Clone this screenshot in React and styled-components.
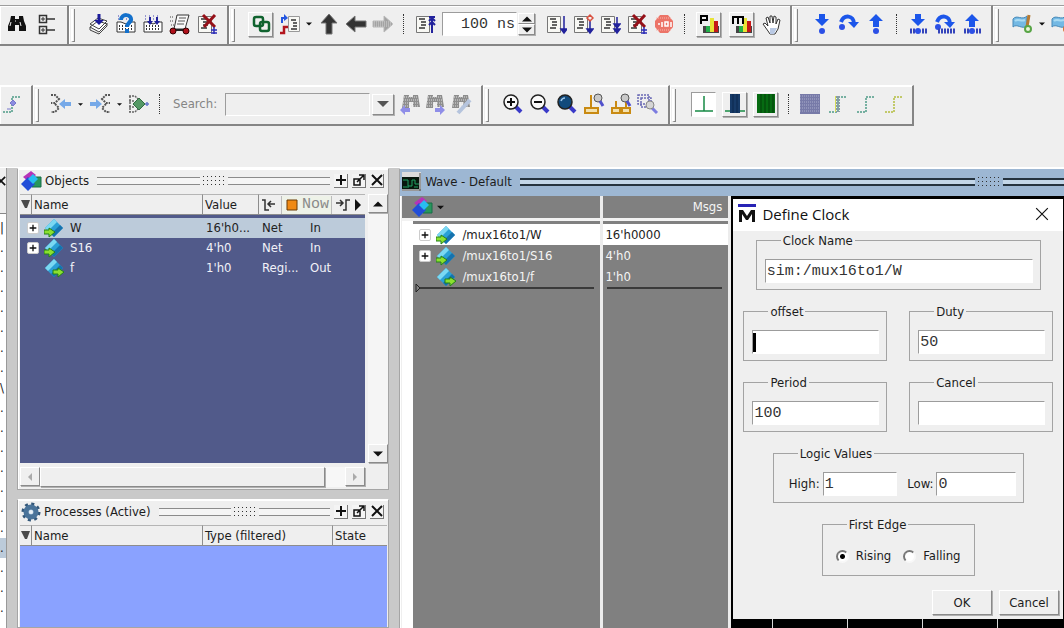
import React from 'react';
import styled, { createGlobalStyle, css } from 'styled-components';

const GlobalStyle = createGlobalStyle`
  * {
    box-sizing: border-box;
  }

  body {
    margin: 0;
    background: #efefef;
    color: #1c1c1c;
    font: 13px/16px 'DejaVu Sans Condensed', 'Noto Sans', sans-serif;
    overflow: hidden;
  }

  svg {
    display: block;
    flex: none;
  }
`;

const mono = css`
  font: 15px/18px 'Liberation Mono', monospace;
`;

const raised = css`
  border: 1px solid;
  border-color: #fff #8a8a8a #8a8a8a #fff;
  box-shadow: 1px 1px 0 #b0b0b0;
  background: #efefef;
`;

const sunken = css`
  border: 1px solid;
  border-color: #9c9c9c #fff #fff #9c9c9c;
`;

/* ---------- page ---------- */

const Page = styled.div`
  display: flex;
  flex-direction: column;
  height: 100vh;
`;

const ToolbarArea = styled.header`
  display: flex;
  flex-direction: column;
  gap: 39px;
  padding: 5px 0 41px;
  overflow: hidden;
`;

const ToolbarRow = styled.div`
  display: flex;
`;

const Toolbar = styled.div`
  display: flex;
  align-items: center;
  flex: none;
  height: 41px;
  padding: 0 ${({ $end = 7 }) => $end}px 2px 0;
  border-top: 1px solid ${({ $soft }) => ($soft ? '#fff' : '#9d9d9d')};
  border-right: 2px solid #858585;
  border-bottom: 2px solid #858585;
  box-shadow: inset 1px 1px 0 #fff;
`;

const Grip = styled.span`
  align-self: stretch;
  width: 4px;
  margin: 3px ${({ $gap = 10 }) => $gap}px 0 2px;
  border-left: 2px solid #fff;
  border-right: 1px solid #868686;
  border-bottom: 1px solid #868686;
`;

const Tool = styled.button`
  display: flex;
  align-items: center;
  justify-content: center;
  flex: none;
  width: ${({ $w = 27 }) => $w}px;
  height: 26px;
  margin: 0;
  padding: 0;
  border: 0;
  background: none;
`;

const FramedTool = styled(Tool)`
  width: 25px;
  height: 25px;
  margin: 0 ${({ $side = 3 }) => $side}px;
  ${({ $pressed }) => ($pressed ? sunken : raised)}
  ${({ $pressed }) => $pressed && 'background: #fff;'}
`;

const Separator = styled.span`
  height: 20px;
  margin: 0 7px;
  border-left: 1px dotted #333;
`;

const TimeInput = styled.input`
  ${mono}
  ${sunken}
  width: 75px;
  height: 24px;
  margin-left: 4px;
  padding: 0 1px;
  text-align: right;
  color: #333;
  background: #fff;
`;

const Spinner = styled.div`
  display: flex;
  flex-direction: column;
  width: 17px;
  margin: 0 7px 0 1px;
`;

const SpinButton = styled.button`
  ${raised}
  display: flex;
  align-items: center;
  justify-content: center;
  height: 11px;
  padding: 0;
`;

const SearchLabel = styled.label`
  margin-left: 6px;
  color: #858585;
`;

const SearchInput = styled.input`
  ${sunken}
  width: 145px;
  height: 23px;
  margin: 0 2px 0 8px;
  background: #efefef;
`;

const SearchDrop = styled.button`
  ${raised}
  width: 22px;
  height: 21px;
  margin-right: 5px;
  padding: 0 4px;
`;

/* ---------- panes ---------- */

const Workspace = styled.main`
  display: grid;
  flex: 1;
  grid-template-columns: 7px 35% 1fr;
  gap: 10px;
  min-height: 0;
  border-top: 1px solid #fff;
  background: #c9c9c9;
`;

const Stack = styled.div`
  display: grid;
  grid-template-rows: 5fr 2fr;
  gap: 9px;
  min-height: 0;
`;

const Pane = styled.section`
  display: flex;
  flex-direction: column;
  min-width: 0;
  min-height: 0;
  border: 1px solid #a5a5a5;
  border-top-color: #fff;
  box-shadow: inset 1px 1px 0 #fff;
  background: #efefef;
`;

const PaneTitle = styled.div`
  display: flex;
  align-items: center;
  gap: 3px;
  flex: none;
  height: 25px;
  padding: 0 4px 2px 3px;
`;

const PaneName = styled.h2`
  margin: 0 5px 0 0;
  font-size: 13px;
  font-weight: normal;
`;

const Rule = styled.span`
  flex: ${({ $grow = 1 }) => $grow} 1 0;
  height: 8px;
  border: solid ${({ $dark }) => ($dark ? '#25333f' : '#8b8b8b')};
  border-width: ${({ $dark }) => ($dark ? 2 : 1)}px 0;
  background: ${({ $dark }) => ($dark ? '#c3d6e8' : '#f5f5f5')};
`;

const Dots = styled.span`
  width: 22px;
  height: 9px;
  background: linear-gradient(transparent 1px, ${({ $paper = '#efefef' }) => $paper} 1px) 0 0 / 4px
      4px,
    linear-gradient(90deg, #333 1px, transparent 1px) 0 0 / 4px 4px;
`;

const TitleButton = styled.button`
  display: flex;
  align-items: center;
  justify-content: center;
  width: 14px;
  height: 14px;
  margin-left: 1px;
  padding: 0;
  border: solid #777;
  border-width: 0 1px 1px 0;
  background: #f4f4f4;
`;

const Strip = styled.div`
  overflow: hidden;
  border-right: 1px solid #999;
  background: #fff;
`;

const StripHead = styled.div`
  display: flex;
  align-items: center;
  justify-content: flex-end;
  height: 26px;
  background: #efefef;
`;

const StripGap = styled.div`
  height: 24px;
  border-bottom: 4px solid #fff;
  background: #efefef;
  box-shadow: inset 0 -1px 0 #888;
`;

const StripRow = styled.div`
  height: 20px;
  line-height: 20px;
  background: ${({ $active }) => ($active ? '#bccbda' : '#fff')};
`;

const Split = styled.div`
  display: flex;
  flex: 1;
  min-height: 0;
`;

const ListArea = styled.div`
  flex: 1;
  min-width: 0;
  margin: 0 ${({ $end = 3 }) => $end}px 0 2px;
  background: ${({ $color }) => $color};
`;

const ListTable = styled.table`
  width: 100%;
  table-layout: fixed;
  border-collapse: separate;
  border-spacing: 0;

  th {
    height: 21px;
    padding: 0 2px;
    border-top: 1px solid #b5b5b5;
    border-right: 1px solid #8d8d8d;
    border-bottom: 1px solid #8d8d8d;
    background: #efefef;
    font-weight: normal;
    text-align: left;
    white-space: nowrap;
  }

  th:first-child {
    padding: 0 1px;
  }

  th:last-child {
    border-right: 0;
  }
`;

const ObjectRow = styled.tr`
  color: ${({ $selected }) => ($selected ? '#222' : '#f2f2f8')};
  background: ${({ $selected }) => ($selected ? '#bccbda' : 'transparent')};

  td {
    height: 20px;
    padding: 0 0 0 3px;
    white-space: nowrap;
  }
`;

const SpacerRow = styled.tr`
  td {
    height: 3px;
    padding: 0;
  }
`;

const NameCell = styled.div`
  display: flex;
  align-items: center;
  padding-left: ${({ $indent = 4 }) => $indent}px;
`;

const Expander = styled.button`
  display: flex;
  align-items: center;
  justify-content: center;
  width: 12px;
  height: 12px;
  margin-right: 5px;
  padding: 0;
  border: 1px solid #ccc;
  border-radius: 2px;
  background: #fff;
  visibility: ${({ $hidden }) => ($hidden ? 'hidden' : 'visible')};
`;

const ItemName = styled.span`
  margin-left: 6px;
`;

const NowBar = styled.div`
  display: flex;
  align-items: center;
  gap: 2px;
  height: 19px;
  color: #8a8a8a;
`;

const NowLabel = styled.span`
  ${mono}
  display: flex;
  align-items: center;
  gap: 4px;
  margin: 0 1px 0 3px;
  padding: 0 2px 0 4px;
  border: solid #bbb;
  border-width: 0 1px;
  background: #eef2e8;
`;

const ScrollColumn = styled.div`
  display: flex;
  flex-direction: column;
  justify-content: space-between;
  width: 20px;
  background: #f5f5f5;
`;

const ScrollRow = styled.div`
  display: flex;
  height: 20px;
  margin: 4px 23px 2px 2px;
  background: #f7f7f7;
`;

const ScrollButton = styled.button`
  ${raised}
  display: flex;
  align-items: center;
  justify-content: center;
  flex: none;
  width: 20px;
  height: 19px;
  padding: 0;
`;

const ScrollThumb = styled.div`
  ${raised}
  flex: 1;
  margin-right: 20px;
`;

/* ---------- wave ---------- */

const WavePane = styled(Pane)`
  border-right: 0;
  border-bottom: 0;
`;

const WaveTitle = styled(PaneTitle)`
  height: 27px;
  padding: 0 0 2px 2px;
  background: #9db7d3;
`;

const WaveName = styled(PaneName)`
  margin: 0 5px 0 1px;
`;

const WaveBody = styled.div`
  display: flex;
  flex: 1;
  min-height: 0;
  margin-left: 2px;
`;

const WaveTable = styled.table`
  flex: none;
  width: 329px;
  table-layout: fixed;
  border-collapse: separate;
  border-spacing: 0;
  background: #808080;
  color: #f5f5f5;

  th,
  td {
    padding: 0 6px 0 2px;
    border-right: 3px solid #ececec;
  }

  th {
    height: 25px;
    border-bottom: 3px solid #f2f2f2;
    font-weight: normal;
    text-align: left;
  }

  th:last-child {
    text-align: right;
  }

  td:first-child {
    padding-left: 0;
    border-left: 11px solid #fff;
  }
`;

const SignalRow = styled.tr`
  color: ${({ $selected }) => ($selected ? '#222' : '#f5f5f5')};
  background: ${({ $selected }) => ($selected ? '#fff' : 'transparent')};

  td {
    height: 21px;
  }
`;

const FillRow = styled.tr`
  height: 100%;
  vertical-align: top;
`;

const CursorLine = styled.div`
  display: flex;
  align-items: center;
  height: 2px;
  margin: 0 0 0 2px;

  &::after {
    content: '';
    flex: 1;
    height: 2px;
    background: #3a3a3a;
  }
`;

const MenuIcons = styled.div`
  display: flex;
  align-items: center;
  gap: 4px;
  padding-left: 8px;
`;

const WaveCanvas = styled.div`
  position: relative;
  flex: 1;
  background: repeating-linear-gradient(90deg, transparent 0 74px, #d8d8d8 74px 75px) 42px 0 / 75px
    100% #000;
`;

/* ---------- dialog ---------- */

const Dialog = styled.div`
  position: absolute;
  top: 0;
  left: 0;
  right: 0;
  border: solid #000;
  border-width: 3px 1px 0 2px;
  background: #efefef;
`;

const DialogTitle = styled.div`
  display: flex;
  align-items: center;
  gap: 6px;
  height: 32px;
  padding: 0 14px 3px 5px;
  background: #fff;
`;

const DialogName = styled.h1`
  flex: 1;
  margin: 0;
  font: 15px/20px 'Open Sans', 'Noto Sans', sans-serif;
  color: #111;
`;

const PlainButton = styled.button`
  padding: 0;
  border: 0;
  background: none;
`;

const DialogBody = styled.form`
  display: flex;
  flex-direction: column;
  align-items: center;
  gap: 12px;
  padding: 0 10px 4px;
`;

const Group = styled.fieldset`
  width: ${({ $width = '100%' }) => $width};
  min-width: 0;
  margin: 0;
  padding: 10px 7px 6px 8px;
  border: 1px solid #a3a3a3;
`;

const GroupLegend = styled.legend`
  height: 18px;
  margin-left: 16px;
  padding: 2px 2px 0;
`;

const Pair = styled.div`
  display: grid;
  grid-template-columns: 1fr 1fr;
  gap: 22px;
  width: 100%;
`;

const TextInput = styled.input`
  ${mono}
  ${sunken}
  display: block;
  width: 100%;
  min-width: 0;
  height: 24px;
  padding: 0 1px;
  color: #333;
  background: #fff;
  ${({ $caret }) =>
    $caret && 'background: linear-gradient(#000, #000) 0 2px / 3px 19px no-repeat #fff;'}
`;

const Fields = styled.div`
  display: flex;
  gap: 10px;
  padding-left: 7px;
`;

const FieldLabel = styled.label`
  display: flex;
  align-items: center;
  gap: 3px;
  flex: 1;
`;

const Radios = styled.div`
  display: flex;
  align-items: center;
  gap: 12px;
  height: 26px;
  padding-left: 5px;
`;

const RadioLabel = styled.label`
  display: flex;
  align-items: center;
  gap: 7px;
`;

const Radio = styled.input`
  appearance: none;
  width: 13px;
  height: 13px;
  margin: 0;
  border: 2px solid;
  border-color: #777 #f8f8f8 #f8f8f8 #777;
  border-radius: 50%;
  background: #fff;

  &:checked {
    background: radial-gradient(circle, #000 2px, #fff 3px);
  }
`;

const Actions = styled.div`
  display: flex;
  gap: 7px;
  align-self: flex-end;
  margin: 2px -6px 0 0;
`;

const ActionButton = styled.button`
  ${raised}
  width: 60px;
  height: 25px;
  padding: 0;
  color: #1c1c1c;
  font: inherit;
`;

/* ---------- icons ---------- */

const Svg = ({ w = 22, h = 22, children, ...rest }) => (
  <svg width={w} height={h} viewBox={`0 0 ${w} ${h}`} fill="none" aria-hidden="true" {...rest}>
    {children}
  </svg>
);

const Caret = ({ size = 6, dir = 'down', color = '#111' }) => {
  const paths = {
    down: 'M0 2h8l-4 4z',
    up: 'M0 6h8l-4-4z',
    left: 'M6 0v8l-4-4z',
    right: 'M2 0v8l4-4z',
  };
  return (
    <svg width={size} height={size} viewBox="0 0 8 8" aria-hidden="true">
      <path d={paths[dir]} fill={color} />
    </svg>
  );
};

const SortIcon = () => (
  <Svg w={9} h={9}>
    <path d="M0 0h9L6 8H4z" fill="#4a4a4a" />
  </Svg>
);

const Binoculars = () => (
  <Svg>
    <path d="M5 3h4v3h4V3h4l1 5 2 5v5h-7v-6H9v6H2v-5l2-5z" fill="#111" />
    <path d="M5 9l-1 4M14 9l1 4M9 8h1" stroke="#eee" />
  </Svg>
);

const TreeIcon = () => (
  <Svg>
    <path d="M2.500 2.500h7v7h-7zM2.500 13.500h7v7h-7zM9 6h9M9 17h9" stroke="#333" strokeWidth="1.500" />
    <path d="M4 6h4M6 4v4M4 17h4M6 15v4" stroke="#333" />
  </Svg>
);

const CompileIcon = () => (
  <Svg>
    <path d="M2 14l8-6 9 3-8 8zM2 11l8-6 9 3-8 8z" fill="#fff" stroke="#444" />
    <path d="M2 14v3l9 4 8-8v-3" stroke="#444" />
    <path d="M11 1v8" stroke="#1b1b9a" strokeWidth="3" />
    <path d="M6 7h10l-5 5z" fill="#1b1b9a" />
  </Svg>
);

const Book = ({ children }) => (
  <>
    <path d="M2 9v10h18V9h-4l-5 2-5-2z" fill="#fff" stroke="#333" />
    <path d="M4 13h14M4 16h14" stroke="#333" strokeDasharray="1 2" strokeWidth="2" />
    <path d="M3 3h16M3 6h16" stroke="#3b3bb0" strokeDasharray="1 3" />
    {children}
  </>
);

const HelpBookIcon = () => (
  <Svg>
    <Book>
      <path d="M6 7c0-7 11-6 10 0-1 3-4 3-4 7" stroke="#1471cc" strokeWidth="4" />
      <path d="M10 16h4v4h-4z" fill="#1471cc" />
    </Book>
  </Svg>
);

const CompileAllIcon = () => (
  <Svg>
    <Book>
      <path d="M8 4v6M15 4v6" stroke="#22229c" strokeWidth="2" />
      <path d="M5 8h6l-3 4zM12 8h6l-3 4z" fill="#22229c" />
    </Book>
  </Svg>
);

const SimulateIcon = () => (
  <Svg>
    <path d="M8 2h12l-4 14H5z" fill="#f8f8f8" stroke="#333" />
    <path d="M10 5h7M9 8h7M8 11h7" stroke="#555" />
    <path d="M1 4l4 0M1 8h3M2 12l3 0" stroke="#444" strokeDasharray="1 1" />
    <path d="M3 17h14" stroke="#222" strokeWidth="2" />
    <circle cx="4" cy="18" r="3" fill="#b0101a" stroke="#300" />
    <circle cx="17" cy="18" r="3" fill="#b0101a" stroke="#300" />
  </Svg>
);

const Listing = () => (
  <>
    <path d="M2.500 3.500h13v16h-13z" fill="#f8f8f4" stroke="#777" />
    <path d="M5 6h6M7 9h5M7 12h5M5 15h6" stroke="#333" strokeWidth="1.500" />
  </>
);

const BreakIcon = () => (
  <Svg>
    <Listing />
    <path d="M7 2l12 12M19 2L8 14" stroke="#951018" strokeWidth="3" />
    <path d="M18 14v7M15 20h6M15 17h6" stroke="#2b2bb5" strokeWidth="1.500" />
  </Svg>
);

const LinkIcon = () => (
  <Svg>
    <rect x="4" y="4" width="9" height="9" rx="2" stroke="#10632f" strokeWidth="2.500" />
    <rect x="10" y="9" width="9" height="9" rx="2" stroke="#10632f" strokeWidth="2.500" />
  </Svg>
);

const RestartIcon = () => (
  <Svg>
    <path d="M9.500 3.500h11v15h-11z" fill="#f8f8f4" stroke="#999" />
    <path d="M12 7h5M14 10h4M14 13h4M12 16h6" stroke="#333" strokeWidth="1.500" />
    <path d="M3 10V5h4" stroke="#2456e0" strokeWidth="2" />
    <path d="M5 1l4 4-4 3z" fill="#2456e0" />
    <path d="M1 20h4v-6h4" stroke="#b3151d" strokeWidth="2.500" />
  </Svg>
);

const BigArrow = ({ turn = 0, light }) => (
  <Svg>
    <path
      d="M11 1l8 9h-5v11H8V10H3z"
      fill={light ? '#a3a3a3' : '#333'}
      stroke={light ? '#b8b8b8' : '#777'}
      transform={`rotate(${turn} 11 11)`}
    />
    {light && (
      <path d="M2 9h18M2 11h19M2 13h18" stroke="#d5d5d5" strokeDasharray="1 1" />
    )}
  </Svg>
);

const StepIcon = ({ kind }) => (
  <Svg>
    <Listing />
    {kind === 'up' && (
      <path d="M18 4v16M15 8l3-3 3 3M15 12l3-3 3 3M15 4h6" stroke="#22229c" strokeWidth="2" />
    )}
    {kind === 'run' && (
      <path d="M19 3v14M19 20l-3-4h6z" stroke="#22229c" fill="#22229c" strokeWidth="1.500" />
    )}
    {kind === 'continue' && (
      <>
        <path d="M18 8v9M18 20l-3-4h6z" stroke="#22229c" fill="#22229c" strokeWidth="1.500" />
        <path d="M18 2l3 3-3 3-3-3z" stroke="#d9503f" strokeWidth="1.500" />
      </>
    )}
    {kind === 'all' && (
      <path
        d="M18 4v14M18 15l-3-4h6zM18 20l-3-4h6z"
        stroke="#22229c"
        fill="#22229c"
        strokeWidth="1.500"
      />
    )}
  </Svg>
);

const StopIcon = () => (
  <Svg>
    <path d="M7 2h8l5 6v6l-5 6H7l-5-6V8z" fill="#ec7468" />
    <path d="M3 5h16M3 17h16" stroke="#f7b6ae" strokeDasharray="1 1" />
    <path d="M5 11h2M9 9v5M12 9h3v4h-3zM18 9v5" stroke="#fff" strokeWidth="1.500" />
  </Svg>
);

const ProfileIcon = ({ memory }) => (
  <Svg>
    <path d="M5 13h16v7H5z" fill="#444" />
    <path d="M8 13h4v6H8z" fill="#23b04a" />
    <path d="M12 5h4v14h-4z" fill="#e8e337" />
    <path d="M16 8h4v11h-4z" fill="#c51818" />
    {memory ? (
      <path d="M2 11V4h10v7M7 4v7" stroke="#000" strokeWidth="2" />
    ) : (
      <path d="M3 11V3h6v4H3" stroke="#000" strokeWidth="2" />
    )}
  </Svg>
);

const HandIcon = () => (
  <Svg>
    <path
      d="M7 18l-5-7 2-1 3 3-2-8 2-1 2 6V3h2l1 7 1-7 2 1v7l2-5 2 1-2 9-3 5H9z"
      fill="#fff"
      stroke="#333"
    />
    <path d="M9 15h7l-3 6H9z" fill="#b9c9e4" />
  </Svg>
);

const BlueArrow = ({ kind, ticks }) => (
  <Svg>
    {kind === 'down' && <path d="M8 1h6v5h4l-7 7-7-7h4z" fill="#1c56ea" />}
    {kind === 'over' && (
      <>
        <path d="M3 9c3-8 13-7 13 2" stroke="#1c56ea" strokeWidth="4" />
        <path d="M10 9h11l-5 6z" fill="#1c56ea" />
      </>
    )}
    {kind === 'up' && <path d="M11 1l7 7h-4v6H8V8H4z" fill="#1c56ea" />}
    <circle cx={kind === 'over' ? 4 : 11} cy={kind === 'over' ? 14 : 18} r="3" fill="#2c50e6" />
    {ticks && (
      <path
        d={kind === 'over' ? 'M4 18h17' : 'M3 18h5M15 18h5'}
        stroke="#3444bb"
        strokeWidth="5"
        strokeDasharray="2 1"
      />
    )}
  </Svg>
);

const FlagIcon = ({ tone = '#58a546' }) => (
  <Svg>
    <path d="M1 6c4-5 9 2 14-3v10c-5 4-10-3-14 1z" fill="#74b9e4" stroke="#4789b8" />
    <path d="M3 8c3-3 6 1 10-1" stroke="#a9dbf3" strokeWidth="2" />
    <path d="M17 2l-2 12" stroke="#b57933" strokeWidth="3" />
    <circle cx="16" cy="16" r="3" fill="#e9f5d9" stroke={tone} strokeWidth="2" />
  </Svg>
);

const EdgeIcon = ({ color = '#4f9c88', bar, dot }) => (
  <Svg>
    <path d="M2 19h9V4h8" stroke={color} strokeWidth="1.500" strokeDasharray="2 1" />
    {bar && <path d="M11 3v16" stroke={bar} strokeWidth="4" strokeDasharray="2 1" />}
    {bar && <path d="M8.500 3v16" stroke="#d6dc5a" />}
    {dot && <path d="M9 10l3-3 3 3-3 3zM6 16h4" fill="#8c8ce0" stroke="#7777cc" />}
  </Svg>
);

const BranchIcon = ({ merge }) => (
  <Svg>
    {merge ? (
      <>
        <path
          d="M21 2h-4l-4 4 4 4h4M17 11l-4 4 4 4h4"
          stroke="#555"
          strokeDasharray="2 1"
          strokeWidth="2"
        />
        <path d="M1 9h6V6l6 5-6 5v-3H1z" fill="#76a9e8" />
      </>
    ) : (
      <>
        <path
          d="M1 2h4l4 4-4 4H1M5 11l4 4-4 4H1"
          stroke="#555"
          strokeDasharray="2 1"
          strokeWidth="2"
        />
        <path d="M21 9h-6V6l-6 5 6 5v-3h6z" fill="#76a9e8" />
      </>
    )}
  </Svg>
);

const DriverIcon = () => (
  <Svg>
    <path
      d="M1 3h6l3 3M1 19h6l3-3M1 8h6M1 14h6M2 3v16"
      stroke="#666"
      strokeDasharray="2 1"
      strokeWidth="1.500"
    />
    <path d="M11 5l6 6-6 6-6-6z" fill="#559865" stroke="#316b42" />
    <path d="M17 11h4M19 9v4" stroke="#6677cc" strokeWidth="1.500" />
  </Svg>
);

const FadedFind = ({ kind }) => (
  <Svg>
    <path d="M4 2h5v2h4V2h5l2 12h-7V9H9v6H2z" fill="#8d8d8d" />
    <path d="M4 4h14M3 7h16M3 10h16M3 13h16" stroke="#ddd" strokeDasharray="1 1" />
    {kind === 'prev' && <path d="M0 17l5-5v3h5v4H5v3z" fill="#8f8ee8" />}
    {kind === 'next' && <path d="M21 17l-5-5v3h-5v4h5v3z" fill="#8f8ee8" />}
    {kind === 'options' && <path d="M8 20L20 7" stroke="#b5c4dd" strokeWidth="4" />}
  </Svg>
);

const ZoomIcon = ({ kind }) => (
  <Svg>
    <path d="M13 13l6 6" stroke="#3a3ac8" strokeWidth="4" />
    <circle
      cx="9"
      cy="9"
      r="7"
      fill={kind === 'full' ? '#124a7c' : '#fafafa'}
      stroke="#222"
      strokeWidth="1.500"
    />
    {kind !== 'full' && <path d="M5 9h8" stroke="#111" strokeWidth="2" />}
    {kind === 'in' && <path d="M9 5v8" stroke="#111" strokeWidth="2" />}
    {kind === 'full' && <path d="M5 8c1-3 3-3 4-3" stroke="#9cc4e8" strokeWidth="1.500" />}
  </Svg>
);

const CursorZoomIcon = ({ double }) => (
  <Svg>
    <path
      d={double ? 'M6 8v7H2v5h8v-5H6M16 9v6h-4v5h8v-5h-4' : 'M8 2v13H2v5h13v-5H8'}
      stroke="#c98a12"
      strokeWidth="2"
      fill="#f3e1ae"
    />
    <circle cx="15" cy="5" r="4" fill="#c9c9c9" stroke="#555" />
    <path d="M17 8l3 5" stroke="#5151cc" strokeWidth="3" />
  </Svg>
);

const ZoomAreaIcon = () => (
  <Svg>
    <path d="M1 2h11v9H1zM4 5h10v9H4z" stroke="#6a6ab5" strokeDasharray="2 1" strokeWidth="1.500" />
    <path d="M15 15l5 5" stroke="#7c7ce0" strokeWidth="3" />
    <circle cx="13" cy="12" r="4" fill="#d5d5d5" stroke="#888" />
  </Svg>
);

const LevelIcon = ({ kind }) => (
  <Svg>
    {kind === 'line' && <path d="M2 18h18M11 3v15" stroke="#178b45" strokeWidth="1.500" />}
    {kind === 'blue' && (
      <>
        <path d="M1 18h20" stroke="#178b45" strokeWidth="1.500" />
        <path d="M6 1h10v19H6z" fill="#173b68" />
        <path d="M9 1v19M13 1v19" stroke="#0c284c" />
      </>
    )}
    {kind === 'green' && (
      <>
        <path d="M2 1h18v19H2z" fill="#066b12" />
        <path d="M6 1v19M10 1v19M14 1v19M18 1v19" stroke="#034008" />
      </>
    )}
    {kind === 'faded' && (
      <>
        <path d="M1 1h20v20H1z" fill="#777aa8" />
        <path
          d="M1 3h20M1 6h20M1 9h20M1 12h20M1 15h20M1 18h20"
          stroke="#aaaccb"
          strokeDasharray="1 1"
        />
      </>
    )}
  </Svg>
);

const CubesIcon = () => (
  <Svg w={21} h={20}>
    <path d="M11 6h9v10h-9z" fill="#28975c" stroke="#176d46" />
    <path d="M2 6l8-6 5 4-7 7z" fill="#b633b7" />
    <path d="M7 6l7 7-7 7-7-7z" fill="#224ed8" />
    <path d="M12 3l5 5-5 5-5-5z" fill="#28bdf0" />
  </Svg>
);

const SignalIcon = ({ out }) => (
  <Svg w={20} h={20}>
    <path d="M10 1l9 9-9 9-9-9z" fill="#2aa0d5" />
    <path d="M10 1l-9 9 3 3 9-9z" fill="#7ad8f2" />
    <path d="M19 10l-9 9-3-3 9-9z" fill="#1672ad" />
    <path
      d={out ? 'M9 12h5v-2l6 4-6 5v-3H9z' : 'M0 12h5v-2l6 4-6 5v-3H0z'}
      fill="#8be02f"
      stroke="#23801b"
    />
  </Svg>
);

const GearIcon = () => (
  <Svg w={20} h={20}>
    <circle cx="10" cy="10" r="8" stroke="#335779" strokeWidth="3" strokeDasharray="3 3.280" />
    <circle cx="10" cy="10" r="5" fill="#a8c4da" stroke="#4a7399" strokeWidth="5" />
    <circle cx="10" cy="10" r="2" fill="#e8f0f6" />
  </Svg>
);

const WaveIcon = () => (
  <Svg w={19} h={19}>
    <path d="M0 0h19v19H0z" fill="#ddd" />
    <path d="M0 5h17v12H0z" fill="#07170d" />
    <path d="M1 8h5v6h4V8h3v4h4M1 15h6M12 15h4" stroke="#21a264" />
    <path d="M18 1v18M0 18h19" stroke="#555" />
  </Svg>
);

const LogoIcon = () => (
  <Svg w={18} h={19}>
    <path d="M0 0h18v3H0z" fill="#2823b5" />
    <path d="M1 18V6h4l4 6 4-6h4v12h-3v-8l-4 6H8l-4-6v8z" fill="#111" />
  </Svg>
);

const EdgeSeek = ({ next }) => (
  <Svg w={15} h={14}>
    {next ? (
      <path d="M1 5h7M5 2l3 3-3 3M8 12h3V2h4" stroke="#333" strokeWidth="1.500" />
    ) : (
      <path d="M1 2h3v10h4M14 6H7M10 3L7 6l3 3" stroke="#333" strokeWidth="1.500" />
    )}
  </Svg>
);

const PlusIcon = ({ w = 12 }) => (
  <svg width={w} height={w} viewBox="0 0 12 12" aria-hidden="true">
    <path d="M1 6h10M6 1v10" stroke="#111" strokeWidth="2" />
  </svg>
);

const UndockIcon = () => (
  <Svg w={12} h={12}>
    <path d="M1 5h6v6H1zM4 8l7-7M6 1h5v5" stroke="#111" strokeWidth="1.500" />
  </Svg>
);

const CrossIcon = ({ w = 12, thin }) => (
  <svg width={w} height={w} viewBox="0 0 12 12" aria-hidden="true">
    <path d="M1 1l10 10M11 1L1 11" stroke="#111" strokeWidth={thin ? 1 : 2} />
  </svg>
);

const CursorMark = () => (
  <Svg w={5} h={8}>
    <path d="M1 0v8l4-4z" stroke="#222" />
  </Svg>
);

/* ---------- data ---------- */

const objects = [
  { name: 'W', value: "16'h0...", kind: 'Net', mode: 'In', bus: true, selected: true },
  { name: 'S16', value: "4'h0", kind: 'Net', mode: 'In', bus: true },
  { name: 'f', value: "1'h0", kind: 'Regi...', mode: 'Out', out: true },
];

const signals = [
  { name: '/mux16to1/W', value: "16'h0000", bus: true, selected: true },
  { name: '/mux16to1/S16', value: "4'h0", bus: true },
  { name: '/mux16to1/f', value: "1'h0", out: true },
];

const stripRows = Array.from({ length: 20 }, (_, i) => {
  if (i === 0) return '|';
  return i === 8 ? '\\' : '.';
});

/* ---------- components ---------- */

const TitleButtons = () => (
  <>
    <TitleButton aria-label="Maximize">
      <PlusIcon />
    </TitleButton>
    <TitleButton aria-label="Undock">
      <UndockIcon />
    </TitleButton>
    <TitleButton aria-label="Close">
      <CrossIcon />
    </TitleButton>
  </>
);

const MainToolbars = () => (
  <ToolbarRow>
    <Toolbar $end={6}>
      <Tool $w={34} aria-label="Find"><Binoculars /></Tool>
      <Tool aria-label="Expand tree"><TreeIcon /></Tool>
    </Toolbar>
    <Toolbar>
      <Grip />
      <Tool aria-label="Compile"><CompileIcon /></Tool>
      <Tool aria-label="Compile out of date"><HelpBookIcon /></Tool>
      <Tool aria-label="Compile all"><CompileAllIcon /></Tool>
      <Tool aria-label="Simulate"><SimulateIcon /></Tool>
      <Tool aria-label="Break"><BreakIcon /></Tool>
    </Toolbar>
    <Toolbar $end={5}>
      <Grip />
      <FramedTool aria-label="Link"><LinkIcon /></FramedTool>
      <Tool aria-label="Restart"><RestartIcon /></Tool>
      <Tool $w={12} aria-label="Restart menu"><Caret /></Tool>
      <Tool aria-label="Up"><BigArrow /></Tool>
      <Tool aria-label="Back"><BigArrow turn={-90} /></Tool>
      <Tool aria-label="Forward"><BigArrow turn={90} light /></Tool>
      <Separator />
      <Tool aria-label="Step out"><StepIcon kind="up" /></Tool>
      <TimeInput aria-label="Run length" defaultValue="100 ns" />
      <Spinner>
        <SpinButton aria-label="Increase"><Caret size={10} dir="up" /></SpinButton>
        <SpinButton aria-label="Decrease"><Caret size={10} /></SpinButton>
      </Spinner>
      <Tool aria-label="Run"><StepIcon kind="run" /></Tool>
      <Tool aria-label="Continue run"><StepIcon kind="continue" /></Tool>
      <Tool aria-label="Run all"><StepIcon kind="all" /></Tool>
      <Tool aria-label="Break run"><BreakIcon /></Tool>
      <Tool aria-label="Stop"><StopIcon /></Tool>
      <Separator />
      <FramedTool $side={4} aria-label="Performance profile"><ProfileIcon /></FramedTool>
      <FramedTool $side={4} aria-label="Memory profile"><ProfileIcon memory /></FramedTool>
      <Tool aria-label="Pan"><HandIcon /></Tool>
    </Toolbar>
    <Toolbar $end={6}>
      <Grip />
      <Tool aria-label="Step into"><BlueArrow kind="down" /></Tool>
      <Tool aria-label="Step over"><BlueArrow kind="over" /></Tool>
      <Tool aria-label="Step return"><BlueArrow kind="up" /></Tool>
      <Separator />
      <Tool aria-label="Step into current"><BlueArrow kind="down" ticks /></Tool>
      <Tool aria-label="Step over current"><BlueArrow kind="over" ticks /></Tool>
      <Tool aria-label="Step out current"><BlueArrow kind="up" ticks /></Tool>
    </Toolbar>
    <Toolbar>
      <Grip />
      <Tool aria-label="Bookmark"><FlagIcon /></Tool>
      <Tool $w={12} aria-label="Bookmark menu"><Caret /></Tool>
      <Tool aria-label="Next bookmark"><FlagIcon tone="#d96a28" /></Tool>
    </Toolbar>
  </ToolbarRow>
);

const WaveToolbars = () => (
  <ToolbarRow>
    <Toolbar $soft>
      <Tool $w={24} aria-label="Edge"><EdgeIcon dot /></Tool>
    </Toolbar>
    <Toolbar $soft $end={6}>
      <Grip $gap={8} />
      <Tool aria-label="Trace drivers"><BranchIcon /></Tool>
      <Tool $w={12} aria-label="Drivers menu"><Caret size={5} /></Tool>
      <Tool aria-label="Trace readers"><BranchIcon merge /></Tool>
      <Tool $w={12} aria-label="Readers menu"><Caret size={5} /></Tool>
      <Tool aria-label="Show net"><DriverIcon /></Tool>
      <Separator />
      <SearchLabel htmlFor="search">Search:</SearchLabel>
      <SearchInput id="search" />
      <SearchDrop aria-label="Search history"><Caret size={12} color="#555" /></SearchDrop>
      <Tool $w={24} aria-label="Find previous"><FadedFind kind="prev" /></Tool>
      <Tool $w={24} aria-label="Find next"><FadedFind kind="next" /></Tool>
      <Tool $w={28} aria-label="Find options"><FadedFind kind="options" /></Tool>
    </Toolbar>
    <Toolbar $soft>
      <Grip />
      <Tool aria-label="Zoom in"><ZoomIcon kind="in" /></Tool>
      <Tool aria-label="Zoom out"><ZoomIcon kind="out" /></Tool>
      <Tool aria-label="Zoom full"><ZoomIcon kind="full" /></Tool>
      <Tool aria-label="Zoom to cursor"><CursorZoomIcon /></Tool>
      <Tool aria-label="Zoom between cursors"><CursorZoomIcon double /></Tool>
      <Tool aria-label="Zoom area"><ZoomAreaIcon /></Tool>
    </Toolbar>
    <Toolbar $soft $end={4}>
      <Grip $gap={12} />
      <FramedTool $pressed aria-label="No levels"><LevelIcon kind="line" /></FramedTool>
      <FramedTool aria-label="Blue levels"><LevelIcon kind="blue" /></FramedTool>
      <FramedTool aria-label="Green levels"><LevelIcon kind="green" /></FramedTool>
      <Separator />
      <Tool $w={28} aria-label="Fill"><LevelIcon kind="faded" /></Tool>
      <Tool $w={28} aria-label="Wide edge"><EdgeIcon bar="#899ba6" /></Tool>
      <Tool $w={28} aria-label="Green edge"><EdgeIcon /></Tool>
      <Tool $w={28} aria-label="Yellow edge"><EdgeIcon color="#b4bd3f" /></Tool>
    </Toolbar>
  </ToolbarRow>
);

const ObjectsPane = () => (
  <Pane>
    <PaneTitle>
      <CubesIcon />
      <PaneName>Objects</PaneName>
      <Rule />
      <Dots />
      <Rule />
      <TitleButtons />
    </PaneTitle>
    <Split>
      <ListArea $color="#515a8a">
        <ListTable>
          <colgroup>
            <col width="12" />
            <col width="171" />
            <col width="56" />
            <col width="48" />
            <col />
          </colgroup>
          <thead>
            <tr>
              <th aria-label="Sort"><SortIcon /></th>
              <th>Name</th>
              <th>Value</th>
              <th colSpan={2}>
                <NowBar>
                  <EdgeSeek />
                  <NowLabel>
                    <Svg w={12} h={12}>
                      <path d="M1 1h10v10H1z" fill="#f08a13" stroke="#6b3b05" />
                    </Svg>
                    Now
                  </NowLabel>
                  <EdgeSeek next />
                  <Caret size={12} dir="right" />
                </NowBar>
              </th>
            </tr>
          </thead>
          <tbody>
            <SpacerRow>
              <td colSpan={5} />
            </SpacerRow>
            {objects.map(({ name, value, kind, mode, bus, out, selected }) => (
              <ObjectRow key={name} $selected={selected}>
                <td colSpan={2}>
                  <NameCell>
                    <Expander aria-label={`Expand ${name}`} $hidden={!bus}>
                      <PlusIcon w={8} />
                    </Expander>
                    <SignalIcon out={out} />
                    <ItemName>{name}</ItemName>
                  </NameCell>
                </td>
                <td>{value}</td>
                <td>{kind}</td>
                <td>{mode}</td>
              </ObjectRow>
            ))}
          </tbody>
        </ListTable>
      </ListArea>
      <ScrollColumn>
        <ScrollButton aria-label="Scroll up"><Caret size={10} dir="up" /></ScrollButton>
        <ScrollButton aria-label="Scroll down"><Caret size={10} /></ScrollButton>
      </ScrollColumn>
    </Split>
    <ScrollRow>
      <ScrollButton aria-label="Scroll left"><Caret size={8} dir="left" color="#aaa" /></ScrollButton>
      <ScrollThumb />
      <ScrollButton aria-label="Scroll right"><Caret size={8} dir="right" color="#aaa" /></ScrollButton>
    </ScrollRow>
  </Pane>
);

const ProcessesPane = () => (
  <Pane>
    <PaneTitle>
      <GearIcon />
      <PaneName>Processes (Active)</PaneName>
      <Rule />
      <Dots />
      <Rule />
      <TitleButtons />
    </PaneTitle>
    <Split>
      <ListArea $color="#8aa2ff" $end={1}>
        <ListTable>
          <colgroup>
            <col width="12" />
            <col width="171" />
            <col width="130" />
            <col />
          </colgroup>
          <thead>
            <tr>
              <th aria-label="Sort"><SortIcon /></th>
              <th>Name</th>
              <th>Type (filtered)</th>
              <th>State</th>
            </tr>
          </thead>
        </ListTable>
      </ListArea>
    </Split>
  </Pane>
);

const ClockDialog = () => (
  <Dialog role="dialog" aria-labelledby="dialog-title">
    <DialogTitle>
      <LogoIcon />
      <DialogName id="dialog-title">Define Clock</DialogName>
      <PlainButton aria-label="Close dialog">
        <CrossIcon w={14} thin />
      </PlainButton>
    </DialogTitle>
    <DialogBody>
      <Group $width="92%">
        <GroupLegend>Clock Name</GroupLegend>
        <TextInput aria-label="Clock Name" defaultValue="sim:/mux16to1/W" />
      </Group>
      <Pair>
        <Group>
          <GroupLegend>offset</GroupLegend>
          <TextInput aria-label="offset" $caret />
        </Group>
        <Group>
          <GroupLegend>Duty</GroupLegend>
          <TextInput aria-label="Duty" defaultValue="50" />
        </Group>
      </Pair>
      <Pair>
        <Group>
          <GroupLegend>Period</GroupLegend>
          <TextInput aria-label="Period" defaultValue="100" />
        </Group>
        <Group>
          <GroupLegend>Cancel</GroupLegend>
          <TextInput aria-label="Cancel" />
        </Group>
      </Pair>
      <Group $width="81%">
        <GroupLegend>Logic Values</GroupLegend>
        <Fields>
          <FieldLabel>
            High:
            <TextInput defaultValue="1" />
          </FieldLabel>
          <FieldLabel>
            Low:
            <TextInput defaultValue="0" />
          </FieldLabel>
        </Fields>
      </Group>
      <Group $width="153px">
        <GroupLegend>First Edge</GroupLegend>
        <Radios>
          <RadioLabel>
            <Radio type="radio" name="edge" defaultChecked />
            Rising
          </RadioLabel>
          <RadioLabel>
            <Radio type="radio" name="edge" />
            Falling
          </RadioLabel>
        </Radios>
      </Group>
      <Actions>
        <ActionButton type="button">OK</ActionButton>
        <ActionButton type="button">Cancel</ActionButton>
      </Actions>
    </DialogBody>
  </Dialog>
);

const WaveWindow = () => (
  <WavePane>
    <WaveTitle>
      <WaveIcon />
      <WaveName>Wave - Default</WaveName>
      <Rule $grow={15} $dark />
      <Dots $paper="#9db7d3" />
      <Rule $grow={2} $dark />
    </WaveTitle>
    <WaveBody>
      <WaveTable>
        <colgroup>
          <col width="201" />
          <col />
        </colgroup>
        <thead>
          <tr>
            <th aria-label="Signals">
              <MenuIcons>
                <CubesIcon />
                <Caret size={7} />
              </MenuIcons>
            </th>
            <th>Msgs</th>
          </tr>
        </thead>
        <tbody>
          <SpacerRow>
            <td />
            <td />
          </SpacerRow>
          {signals.map(({ name, value, bus, out, selected }) => (
            <SignalRow key={name} $selected={selected}>
              <td>
                <NameCell $indent={6}>
                  <Expander aria-label={`Expand ${name}`} $hidden={!bus}>
                    <PlusIcon w={8} />
                  </Expander>
                  <SignalIcon out={out} />
                  <ItemName>{name}</ItemName>
                </NameCell>
              </td>
              <td>{value}</td>
            </SignalRow>
          ))}
          <FillRow>
            <td>
              <CursorLine>
                <CursorMark />
              </CursorLine>
            </td>
            <td>
              <CursorLine />
            </td>
          </FillRow>
        </tbody>
      </WaveTable>
      <WaveCanvas>
        <ClockDialog />
      </WaveCanvas>
    </WaveBody>
  </WavePane>
);

const App = () => (
  <>
    <GlobalStyle />
    <Page>
      <ToolbarArea>
        <MainToolbars />
        <WaveToolbars />
      </ToolbarArea>
      <Workspace>
        <Strip>
          <StripHead>
            <CrossIcon w={10} />
          </StripHead>
          <StripGap />
          {stripRows.map((mark, i) => (
            <StripRow key={i} $active={i === 16}>
              {mark}
            </StripRow>
          ))}
        </Strip>
        <Stack>
          <ObjectsPane />
          <ProcessesPane />
        </Stack>
        <WaveWindow />
      </Workspace>
    </Page>
  </>
);

export default App;
